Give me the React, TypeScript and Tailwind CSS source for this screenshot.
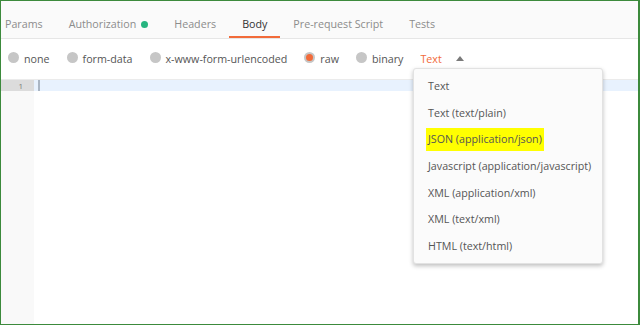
const tabs = [
  { label: "Params" },
  { label: "Authorization", dot: true },
  { label: "Headers" },
  { label: "Body", active: true },
  { label: "Pre-request Script" },
  { label: "Tests" },
];

const bodyTypes = [
  { label: "none" },
  { label: "form-data" },
  { label: "x-www-form-urlencoded" },
  { label: "raw", checked: true },
  { label: "binary" },
];

const contentTypes = [
  "Text",
  "Text (text/plain)",
  "JSON (application/json)",
  "Javascript (application/javascript)",
  "XML (application/xml)",
  "XML (text/xml)",
  "HTML (text/html)",
];

const Radio = ({ checked }: { checked?: boolean }) => (
  <span className="w-[11px] h-[11px] rounded-full bg-[#c6c6c6] flex items-center justify-center mb-[3px]">
    {checked && <span className="w-[7px] h-[7px] rounded-full bg-[#f26b3a]" />}
  </span>
);

const App = () => {
  return (
    <div className="relative w-[640px] h-[325px] overflow-hidden bg-white border border-r-2 border-[#3c8a3c] font-['Open_Sans',sans-serif] flex flex-col">
      {/* Tabs */}
      <div className="h-[38px] shrink-0 bg-[#fafafa] border-b border-[#e6e6e6] flex ml-[-9px] text-[10.7px]">
        {tabs.map((t) => (
          <div
            key={t.label}
            className={
              "flex items-center gap-[5px] px-[13px] pt-[11px] border-b-2 " +
              (t.active
                ? "border-[#f26b3a] text-[#333333]"
                : "border-transparent text-[#8c8c8c]")
            }
          >
            <span>{t.label}</span>
            {t.dot && <span className="w-[7px] h-[7px] rounded-full bg-[#26b47f]" />}
          </div>
        ))}
      </div>

      {/* Body type radios */}
      <div className="h-[41px] shrink-0 border-b border-[#ebebeb] flex items-center pl-[7px] text-[10.7px] text-[#555555]">
        {bodyTypes.map((b) => (
          <div key={b.label} className="flex items-center gap-[5px] mr-[17px]">
            <Radio checked={b.checked} />
            <span>{b.label}</span>
          </div>
        ))}
        <span className="text-[#f26b3a]">Text</span>
        <svg width="8" height="5" viewBox="0 0 8 5" className="ml-[14px] mb-[2px]">
          <path d="M0 5 L4 0 L8 5 Z" fill="#7a7a7a" />
        </svg>
      </div>

      {/* Editor */}
      <div className="flex-1 flex">
        <div className="w-[33px] bg-[#f9f9f9] flex flex-col">
          <div className="h-[11px] bg-[#dcdcdc] text-[8px] leading-[11px] text-[#7a7a7a] text-right pr-[11px]">
            1
          </div>
        </div>
        <div className="flex-1 flex flex-col">
          <div className="h-[11px] bg-[#e8f2fe] flex">
            <span className="ml-[4px] w-[2px] h-full bg-[#aab6c4]" />
          </div>
        </div>
      </div>

      {/* Content type menu */}
      <div className="absolute left-[412px] top-[67px] w-[190px] py-[4px] bg-[#fbfbfb] border border-[#e2e2e2] rounded-[3px] shadow-[0_2px_4px_rgba(0,0,0,0.25)] text-[10.7px] text-[#555555] whitespace-nowrap">
        {contentTypes.map((c) => (
          <div key={c} className="h-[26.6px] flex items-center pl-[14px]">
            {c.startsWith("JSON") ? (
              <span className="bg-[#ffff00] px-[2px] ml-[-2px] py-[3px]">{c}</span>
            ) : (
              <span>{c}</span>
            )}
          </div>
        ))}
      </div>
    </div>
  );
};

export default App;
